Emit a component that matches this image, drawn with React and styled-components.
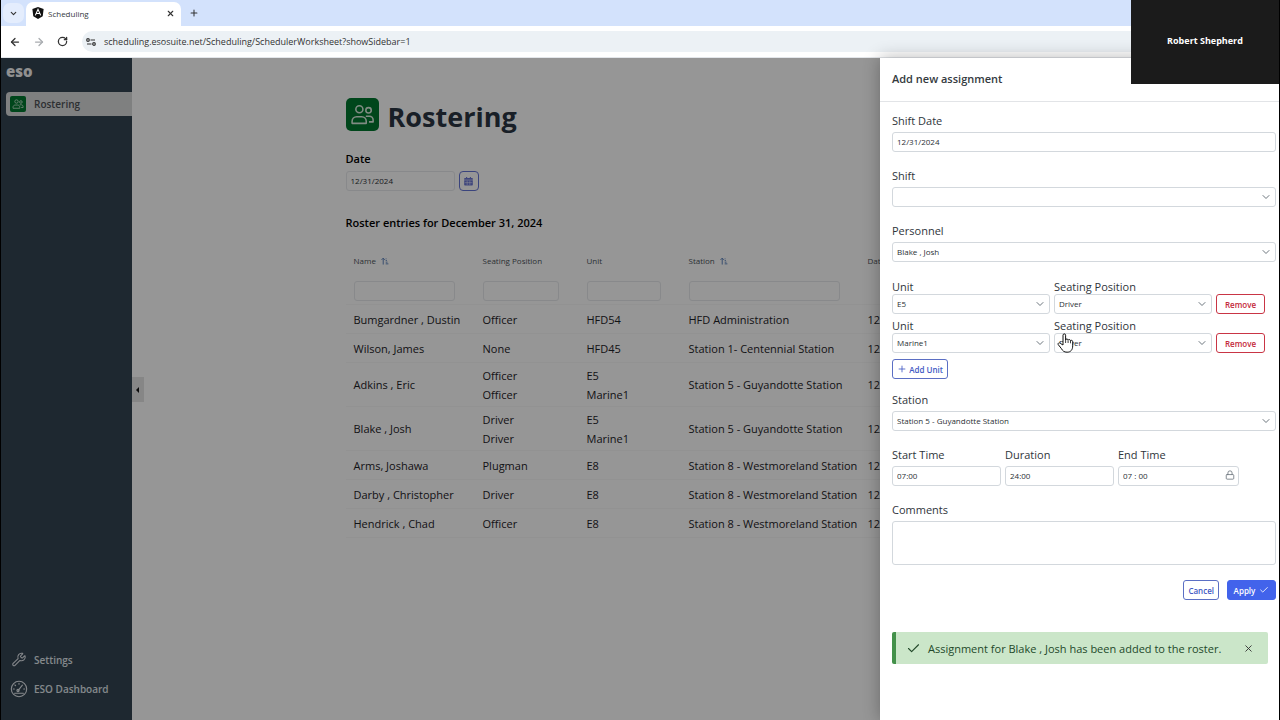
import React, { useState } from 'react';
import styled, { createGlobalStyle, css } from 'styled-components';
import { ArrowLeft, ArrowRight, Check, ChevronDown, Lock, Plus, RotateCw, Wrench, X } from 'lucide-react';

/* ================= DATA ================= */

const COLUMNS = [
  { key: 'name', label: 'Name', sorted: true, width: 129 },
  { key: 'position', label: 'Seating Position', width: 104 },
  { key: 'unit', label: 'Unit', width: 102 },
  { key: 'station', label: 'Station', sorted: true, width: 179 },
  { key: 'date', label: 'Date', width: 206 },
];

const ROSTER = [
  { name: 'Bumgardner , Dustin', seats: [['Officer', 'HFD54']], station: 'HFD Administration' },
  { name: 'Wilson, James', seats: [['None', 'HFD45']], station: 'Station 1- Centennial Station' },
  { name: 'Adkins , Eric', seats: [['Officer', 'E5'], ['Officer', 'Marine1']], station: 'Station 5 - Guyandotte Station' },
  { name: 'Blake , Josh', seats: [['Driver', 'E5'], ['Driver', 'Marine1']], station: 'Station 5 - Guyandotte Station' },
  { name: 'Arms, Joshawa', seats: [['Plugman', 'E8']], station: 'Station 8 - Westmoreland Station' },
  { name: 'Darby , Christopher', seats: [['Driver', 'E8']], station: 'Station 8 - Westmoreland Station' },
  { name: 'Hendrick , Chad', seats: [['Officer', 'E8']], station: 'Station 8 - Westmoreland Station' },
];

const UNITS = ['E5', 'E8', 'Marine1', 'HFD45', 'HFD54'];
const POSITIONS = ['Driver', 'Officer', 'Plugman', 'None'];

/* ================= ICONS ================= */

const PeopleIcon = ({ size }) => (
  <svg width={size} height={size} viewBox="0 0 24 24" fill="none" stroke="currentColor" strokeWidth="1.5" strokeLinejoin="round">
    <circle cx="9" cy="7" r="3.4" />
    <circle cx="17.8" cy="8" r="2.6" />
    <path d="M2 20.5v-1.8c0-2.6 1.9-4.6 4.4-4.6h4.8c2.5 0 4.4 2 4.4 4.6v1.8z" />
    <path d="M15.2 13.6h3.4c2 0 3.6 1.6 3.6 3.6v1.9h-4" />
  </svg>
);

const GaugeIcon = () => (
  <svg width="18" height="18" viewBox="0 0 18 18" fill="none" stroke="currentColor" strokeWidth="1.1" strokeLinecap="round">
    <circle cx="9" cy="9" r="7.7" />
    <path d="M4.6 13.2h8.8M8 10.6l4.4-5.4M9 3.2v1M4.9 5l.7.7M3.3 9h1M13.7 9h1" />
    <circle cx="8" cy="10.5" r="1.1" />
  </svg>
);

const CalendarIcon = () => (
  <svg width="9" height="9" viewBox="0 0 10 10">
    <path d="M2.3 0h1.2v1h3V0h1.2v1H9a.8.8 0 0 1 .8.8V3H.2V1.8A.8.8 0 0 1 1 1h1.3z" fill="currentColor" />
    <path d="M.2 3.6h9.6v5a.8.8 0 0 1-.8.8H1a.8.8 0 0 1-.8-.8z" fill="currentColor" />
    <path d="M.8 6.3h8.4M3.5 4v5M6.5 4v5" stroke="#fff" strokeWidth=".5" />
  </svg>
);

const SortIcon = () => (
  <svg width="8" height="8" viewBox="0 0 9 8" fill="none" stroke="#5d82b8" strokeWidth="1.1">
    <path d="M2.5 8V.8M.6 2.7 2.5.8l1.9 1.9M5.3 1.5h.8M5.3 3.4h1.3M5.3 5.3h2M5.3 7.2h3" />
  </svg>
);

const ShieldIcon = () => (
  <svg width="12" height="12" viewBox="0 0 12 12">
    <path d="M6 0l5.6 2-.9 7.3L6 12 1.3 9.3.4 2z" fill="#111" />
    <path d="M3.3 8.4 6 2.3l2.7 6.1M4.5 6.5h3" fill="none" stroke="#fff" strokeWidth="1.1" />
  </svg>
);

const SiteIcon = () => (
  <svg width="10" height="8" viewBox="0 0 10 8" fill="none" stroke="#333" strokeWidth="1.2">
    <circle cx="2" cy="2" r="1.3" />
    <path d="M4.5 2H9M1 6h4.5" />
    <circle cx="8" cy="6" r="1.3" />
  </svg>
);

const HandPointer = () => (
  <svg width="17" height="20" viewBox="0 0 17 20">
    <path
      d="M6 12V2.2C6 .4 8.6.4 8.6 2.2V7c.2-1.500 2.400-1.400 2.500.2.400-1.100 2.300-.9 2.400.6.700-.9 2.200-.5 2.200.8v4.200c0 4-2 6.400-5.600 6.400-3 0-4.500-1.300-5.700-3.600L1.200 11.600c-.7-1.500 1.200-2.400 2.200-1.200z"
      fill="#fff"
      stroke="#111"
      strokeLinejoin="round"
    />
    <path d="M8.6 7v3M11.1 7.5V10M13.5 8v2.3" stroke="#111" strokeWidth=".8" />
  </svg>
);

/* ================= FORM PARTS ================= */

function SelectField({ id, label, value, options, tight, children }) {
  const [selected, setSelected] = useState(value);

  return (
    <Field $tight={tight}>
      <Label htmlFor={id} $tight={tight}>{label}</Label>
      <Control>
        <Select id={id} value={selected} onChange={(e) => setSelected(e.target.value)}>
          {options.map((o) => (
            <option key={o} value={o}>{o}</option>
          ))}
        </Select>
        <ChevronDown size={12} strokeWidth={2} />
        {children}
      </Control>
    </Field>
  );
}

function TextField({ id, label, value, locked }) {
  return (
    <Field>
      <Label htmlFor={id}>{label}</Label>
      <Control>
        <Input id={id} defaultValue={value} readOnly={locked} />
        {locked && <Lock size={10} strokeWidth={2} />}
      </Control>
    </Field>
  );
}

/* ================= SECTIONS ================= */

function BrowserBar() {
  return (
    <Browser>
      <TabStrip>
        <TabSearch aria-label="Search tabs"><ChevronDown size={9} strokeWidth={3} /></TabSearch>
        <Tab>
          <ShieldIcon />
          <span>Scheduling</span>
          <BareButton aria-label="Close tab"><X size={9} strokeWidth={3} /></BareButton>
        </Tab>
        <BareButton aria-label="New tab"><Plus size={10} strokeWidth={2.5} /></BareButton>
      </TabStrip>
      <Toolbar>
        <BareButton aria-label="Back"><ArrowLeft size={12} strokeWidth={2.5} /></BareButton>
        <BareButton aria-label="Forward" $dim><ArrowRight size={12} strokeWidth={2.5} /></BareButton>
        <BareButton aria-label="Reload"><RotateCw size={11} strokeWidth={2.8} /></BareButton>
        <AddressBar>
          <SiteIcon />
          <Address aria-label="Address" defaultValue="scheduling.esosuite.net/Scheduling/SchedulerWorksheet?showSidebar=1" />
        </AddressBar>
      </Toolbar>
    </Browser>
  );
}

function SideNav() {
  return (
    <Sidebar>
      <Logo>eso</Logo>
      <ActiveLink href="#rostering">
        <AppBadge $size={16}><PeopleIcon size={12} /></AppBadge>
        Rostering
      </ActiveLink>
      <SideFooter>
        <SideLink href="#settings"><Wrench size={15} strokeWidth={1.7} />Settings</SideLink>
        <SideLink href="#dashboard"><GaugeIcon />ESO Dashboard</SideLink>
      </SideFooter>
    </Sidebar>
  );
}

function Roster() {
  return (
    <Main>
      <Container>
        <TitleRow>
          <AppBadge $size={33}><PeopleIcon size={25} /></AppBadge>
          <h1>Rostering</h1>
        </TitleRow>
        <DateLabel htmlFor="roster-date">Date</DateLabel>
        <DateRow>
          <DateInput id="roster-date" defaultValue="12/31/2024" />
          <CalendarButton aria-label="Choose date"><CalendarIcon /></CalendarButton>
        </DateRow>
        <SectionTitle>Roster entries for December 31, 2024</SectionTitle>
        <Table>
          <colgroup>
            {COLUMNS.map((c) => <col key={c.key} style={{ width: c.width }} />)}
          </colgroup>
          <thead>
            <tr>
              {COLUMNS.map((c) => (
                <th key={c.key} scope="col">
                  {c.label}
                  {c.sorted && <SortIcon />}
                </th>
              ))}
            </tr>
            <FilterRow>
              {COLUMNS.map((c) => (
                <td key={c.key}>{c.key !== 'date' && <FilterInput aria-label={`Filter by ${c.label}`} />}</td>
              ))}
            </FilterRow>
          </thead>
          <tbody>
            {ROSTER.map((r) => (
              <tr key={r.name}>
                <td>{r.name}</td>
                <td>{r.seats.map((s, i) => <Line key={i}>{s[0]}</Line>)}</td>
                <td>{r.seats.map((s, i) => <Line key={i}>{s[1]}</Line>)}</td>
                <td>{r.station}</td>
                <td>12/31/2024</td>
              </tr>
            ))}
          </tbody>
        </Table>
      </Container>
    </Main>
  );
}

function AssignmentDrawer() {
  return (
    <Drawer>
      <DrawerHeader>Add new assignment</DrawerHeader>
      <Form onSubmit={(e) => e.preventDefault()}>
        <TextField id="shift-date" label="Shift Date" value="12/31/2024" />
        <SelectField id="shift" label="Shift" value="" options={['']} />
        <SelectField id="personnel" label="Personnel" value="Blake , Josh" options={ROSTER.map((r) => r.name)} />
        <UnitList>
          {['E5', 'Marine1'].map((unit, i) => (
            <UnitRow key={unit}>
              <SelectField tight id={`unit-${i}`} label="Unit" value={unit} options={UNITS} />
              <SelectField tight id={`seat-${i}`} label="Seating Position" value="Driver" options={POSITIONS}>
                {i === 1 && <Pointer><HandPointer /></Pointer>}
              </SelectField>
              <Button $tone="danger" type="button">Remove</Button>
            </UnitRow>
          ))}
        </UnitList>
        <AddButton type="button"><Plus size={10} strokeWidth={2} />Add Unit</AddButton>
        <SelectField
          id="station"
          label="Station"
          value="Station 5 - Guyandotte Station"
          options={['Station 5 - Guyandotte Station', 'Station 8 - Westmoreland Station']}
        />
        <TimeRow>
          <TextField id="start" label="Start Time" value="07:00" />
          <TextField id="duration" label="Duration" value="24:00" />
          <TextField id="end" label="End Time" value="07 : 00" locked />
        </TimeRow>
        <Field>
          <Label htmlFor="comments">Comments</Label>
          <Comments id="comments" />
        </Field>
        <Actions>
          <Button type="button">Cancel</Button>
          <Button $tone="primary" type="submit">Apply <Check size={10} strokeWidth={2} /></Button>
        </Actions>
      </Form>
      <Toast role="status">
        <Check size={15} strokeWidth={1.8} />
        <span>Assignment for Blake , Josh has been added to the roster.</span>
        <BareButton aria-label="Dismiss"><X size={11} strokeWidth={2} /></BareButton>
      </Toast>
    </Drawer>
  );
}

export default function App() {
  return (
    <Screen>
      <GlobalStyle />
      <BrowserBar />
      <Page>
        <SideNav />
        <Roster />
        <Collapse aria-label="Collapse sidebar" />
        <Mask />
        <AssignmentDrawer />
      </Page>
      <CallTile>Robert Shepherd</CallTile>
    </Screen>
  );
}

/* ================= STYLES ================= */

const GlobalStyle = createGlobalStyle`
  * {
    box-sizing: border-box;
  }

  body {
    margin: 0;
    font-family: 'Open Sans', 'Noto Sans', sans-serif;
    font-size: 11px;
    color: #343a40;
  }

  button, input, select, textarea {
    font-family: inherit;
    margin: 0;
  }
`;

const Screen = styled.div`
  position: relative;
  display: flex;
  flex-direction: column;
  min-height: 100vh;
  border: solid #000;
  border-width: 0 1px;
  overflow: hidden;
`;

const Browser = styled.header`
  background: #fff;
  border-bottom: 1px solid #e3e6ea;
`;

const TabStrip = styled.div`
  display: flex;
  align-items: center;
  gap: 8px;
  height: 26px;
  padding-left: 2px;
  background: #d3e2fc;
`;

const BareButton = styled.button`
  display: flex;
  align-items: center;
  justify-content: center;
  padding: 0;
  border: none;
  background: none;
  color: ${({ $dim }) => ($dim ? '#a9acb0' : '#333')};
`;

const TabSearch = styled(BareButton)`
  width: 21px;
  height: 20px;
  border-radius: 7px;
  background: #e4edfd;
`;

const Tab = styled.div`
  display: flex;
  align-items: center;
  gap: 4px;
  width: 155px;
  height: 24px;
  margin: 2px 0 0 -6px;
  padding: 0 6px 2px;
  border-radius: 7px 7px 0 0;
  background: #fff;
  font-size: 8px;

  span {
    flex: 1;
  }
`;

const Toolbar = styled.div`
  display: flex;
  align-items: center;
  gap: 12px;
  height: 31px;
  padding-left: 8px;
`;

const AddressBar = styled.div`
  display: flex;
  flex: 1;
  align-items: center;
  gap: 8px;
  height: 21px;
  margin-left: 2px;
  padding-left: 4px;
  border-radius: 11px 0 0 11px;
  background: #ecf1f5;
`;

const Address = styled.input`
  flex: 1;
  padding: 0;
  border: none;
  background: none;
  outline: none;
  font-size: 9px;
  color: #333;
`;

const Page = styled.div`
  position: relative;
  display: flex;
  flex: 1;
`;

const Sidebar = styled.nav`
  display: flex;
  flex-direction: column;
  width: 131px;
  padding-left: 5px;
  background: #324351;
`;

const Logo = styled.div`
  height: 28px;
  margin-bottom: 6px;
  font-size: 15px;
  font-weight: 800;
  line-height: 26px;
  color: #f0f0f0;
`;

const sideItem = css`
  display: flex;
  align-items: center;
  font-size: 10px;
  font-weight: 600;
  text-decoration: none;
`;

const ActiveLink = styled.a`
  ${sideItem};
  gap: 8px;
  height: 24px;
  padding-left: 4px;
  border-radius: 4px 0 0 4px;
  background: #d4d5d6;
  color: #4c5054;
`;

const SideFooter = styled.div`
  margin-top: auto;
  padding-bottom: 17px;
`;

const SideLink = styled.a`
  ${sideItem};
  gap: 6px;
  height: 29px;
  padding-left: 4px;
  color: #dfe3e8;

  svg {
    width: 18px;
  }
`;

const AppBadge = styled.span`
  display: flex;
  align-items: center;
  justify-content: center;
  width: ${({ $size }) => $size}px;
  height: ${({ $size }) => $size}px;
  border-radius: ${({ $size }) => ($size > 20 ? 5 : 2)}px;
  background: #00752e;
  color: #d5e8da;
`;

const Main = styled.main`
  flex: 1;
  background: #fafafa;
`;

const Container = styled.div`
  max-width: 720px;
  margin: 0 auto;
  padding-top: 40px;
`;

const TitleRow = styled.div`
  display: flex;
  align-items: flex-start;
  gap: 9px;
  margin-bottom: 15px;

  h1 {
    margin: 0;
    font-size: 27px;
    line-height: 37px;
    color: #2a3541;
  }
`;

const DateLabel = styled.label`
  display: block;
  font-weight: 600;
  line-height: 18px;
  color: #000;
`;

const DateRow = styled.div`
  display: flex;
  gap: 4px;
  padding: 3px 0 23px;
`;

const fieldBase = css`
  width: 100%;
  height: 20px;
  padding: 0 4px 1px;
  border: 1px solid #d3d8dd;
  border-radius: 3px;
  outline: none;
  background: #fff;
  font-size: 8px;
  font-weight: 500;
  color: #2b3035;
`;

const DateInput = styled.input`
  ${fieldBase};
  width: 109px;
  border-color: #e3e5e8;
  background: none;
`;

const CalendarButton = styled.button`
  display: flex;
  align-items: center;
  justify-content: center;
  width: 20px;
  height: 20px;
  padding: 0;
  border: 1px solid #6272d0;
  border-radius: 4px;
  background: none;
  color: #6874cf;
`;

const SectionTitle = styled.h2`
  margin: 0 0 14px;
  font-size: 11px;
  font-weight: 600;
  line-height: 18px;
  color: #000;
`;

const Table = styled.table`
  width: 100%;
  table-layout: fixed;
  border-collapse: collapse;

  tr {
    height: 29px;
  }

  th {
    padding: 0 8px;
    font-size: 8px;
    font-weight: 500;
    text-align: left;
    color: #4c5258;
  }

  th svg {
    margin-left: 5px;
    vertical-align: -1px;
  }

  td {
    padding: 3px 8px 2px;
    border-bottom: 1px solid #f3f3f4;
    font-weight: 500;
    white-space: nowrap;
    color: #1d2227;
  }
`;

const FilterRow = styled.tr`
  && td {
    padding: 6px 8px 2px;
  }
`;

const FilterInput = styled.input`
  ${fieldBase};
  display: block;
  width: calc(100% - 12px);
  border-color: #e3e5e8;
  background: none;
`;

const Line = styled.div`
  line-height: 19px;
`;

const Collapse = styled.button`
  position: absolute;
  top: 319px;
  left: 131px;
  width: 12px;
  height: 25px;
  padding: 0;
  border: none;
  background: #dfdfe0;

  &::before {
    content: '';
    display: block;
    width: 0;
    margin-left: 4px;
    border: solid transparent;
    border-width: 3px 3px 3px 0;
    border-right-color: #111;
  }
`;

const Mask = styled.div`
  position: absolute;
  inset: 0;
  background: rgba(0, 0, 0, 0.4);
`;

const Drawer = styled.aside`
  position: absolute;
  top: 0;
  right: 0;
  bottom: 0;
  width: 399px;
  background: #fff;
  box-shadow: 0 0 16px rgba(0, 0, 0, 0.3);
`;

const DrawerHeader = styled.h2`
  margin: 0;
  padding: 0 0 2px 12px;
  border-bottom: 1px solid #e2e4e7;
  font-size: 11px;
  font-weight: 600;
  line-height: 41px;
`;

const Form = styled.form`
  padding: 10px 3px 0 12px;
`;

const Field = styled.div`
  display: flex;
  flex-direction: column;
  gap: ${({ $tight }) => ($tight ? 0 : 2)}px;
  margin-bottom: ${({ $tight }) => ($tight ? 0 : 15)}px;
`;

const Label = styled.label`
  font-weight: 500;
  line-height: ${({ $tight }) => ($tight ? 15 : 18)}px;
  color: #2f353b;
`;

const Control = styled.div`
  position: relative;
  display: flex;

  & > svg {
    position: absolute;
    top: 4px;
    right: 4px;
    color: #6c757d;
    pointer-events: none;
  }
`;

const Input = styled.input`
  ${fieldBase}
`;

const Select = styled.select`
  ${fieldBase};
  appearance: none;
`;

const Comments = styled.textarea`
  ${fieldBase};
  height: 44px;
  resize: none;
`;

const UnitList = styled.div`
  display: grid;
  gap: 4px;
  padding: 2px 0 6px;
`;

const UnitRow = styled.div`
  display: grid;
  grid-template-columns: 158px 158px 49px;
  gap: 4px;
  align-items: end;
`;

const tones = {
  plain: { bg: '#fff', line: '#5b6fc4', text: '#4259c3' },
  danger: { bg: '#fff', line: '#c93545', text: '#c4283a' },
  primary: { bg: '#4263eb', line: '#4263eb', text: '#fff' },
};

const Button = styled.button`
  display: flex;
  align-items: center;
  justify-content: center;
  gap: 4px;
  height: 20px;
  padding: 0 4px;
  border: 1px solid ${({ $tone = 'plain' }) => tones[$tone].line};
  border-radius: 3px;
  background: ${({ $tone = 'plain' }) => tones[$tone].bg};
  color: ${({ $tone = 'plain' }) => tones[$tone].text};
  font-size: 8px;
  font-weight: 600;
  white-space: nowrap;
`;

const AddButton = styled(Button)`
  width: 56px;
  gap: 2px;
  margin-bottom: 12px;
`;

const TimeRow = styled.div`
  display: grid;
  grid-template-columns: 109px 109px 121px;
  gap: 4px;
`;

const Actions = styled.div`
  display: flex;
  justify-content: flex-end;
  gap: 8px;

  ${Button}:last-child {
    width: 49px;
  }
`;

const Toast = styled.div`
  display: flex;
  align-items: center;
  gap: 7px;
  height: 32px;
  margin: 32px 11px 0 12px;
  padding: 0 14px 0 10px;
  border-left: 4px solid #43914a;
  border-radius: 2px;
  background: #cbe6c9;
  font-weight: 500;
  color: #23492a;

  span {
    flex: 1;
  }
`;

const Pointer = styled.span`
  position: absolute;
  top: 0;
  left: 3px;
  pointer-events: none;
`;

const CallTile = styled.aside`
  position: absolute;
  top: 0;
  right: 0;
  display: flex;
  align-items: center;
  justify-content: center;
  width: 148px;
  height: 84px;
  padding-bottom: 3px;
  background: #1b1b1b;
  font-size: 9px;
  font-weight: 700;
  color: #fff;
`;
